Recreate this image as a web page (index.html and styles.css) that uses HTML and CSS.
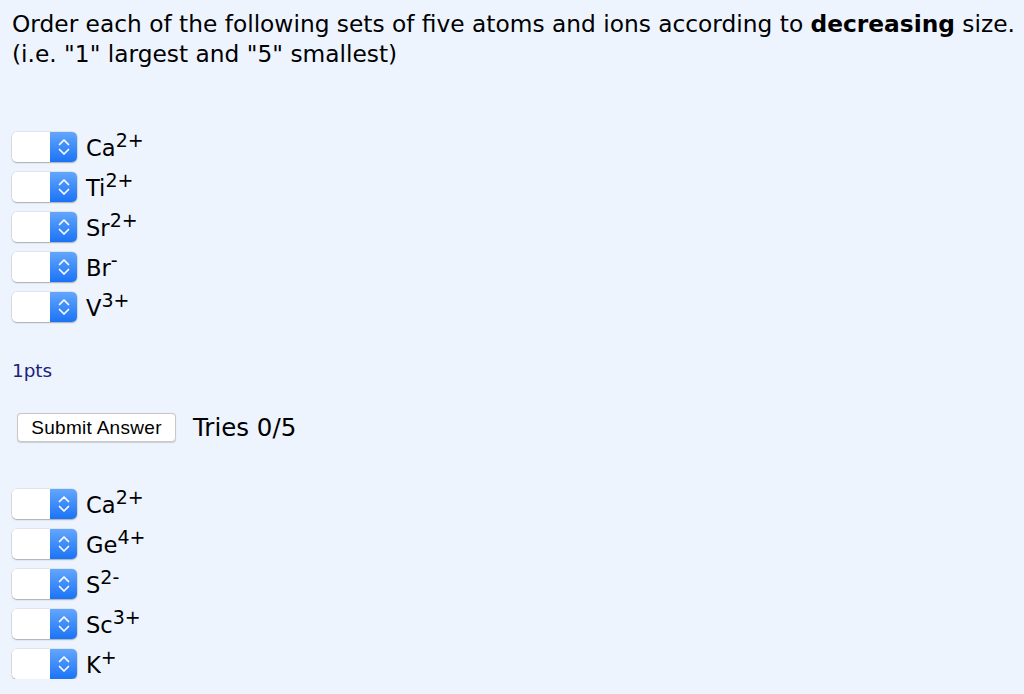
FILE: index.html
```html
<!DOCTYPE html>
<html>
<head>
<meta charset="utf-8">
<link rel="stylesheet" href="styles.css">
</head>
<body>
<div class="page">
  <p class="question">Order each of the following sets of five atoms and ions according to <b>decreasing</b> size.<br>(i.e. "1" largest and "5" smallest)</p>

  <div class="group first">
    <div class="row"><span class="sel"><span class="sel-box"></span><span class="sel-btn"><svg viewBox="0 0 12 18" width="12" height="18"><path d="M1.5 6.5 L6 2 L10.5 6.5 M1.5 11.5 L6 16 L10.5 11.5" fill="none" stroke="#fff" stroke-width="1.7" stroke-linecap="round" stroke-linejoin="round"/></svg></span></span><span class="label">Ca<sup>2+</sup></span></div>
    <div class="row"><span class="sel"><span class="sel-box"></span><span class="sel-btn"><svg viewBox="0 0 12 18" width="12" height="18"><path d="M1.5 6.5 L6 2 L10.5 6.5 M1.5 11.5 L6 16 L10.5 11.5" fill="none" stroke="#fff" stroke-width="1.7" stroke-linecap="round" stroke-linejoin="round"/></svg></span></span><span class="label">Ti<sup>2+</sup></span></div>
    <div class="row"><span class="sel"><span class="sel-box"></span><span class="sel-btn"><svg viewBox="0 0 12 18" width="12" height="18"><path d="M1.5 6.5 L6 2 L10.5 6.5 M1.5 11.5 L6 16 L10.5 11.5" fill="none" stroke="#fff" stroke-width="1.7" stroke-linecap="round" stroke-linejoin="round"/></svg></span></span><span class="label">Sr<sup>2+</sup></span></div>
    <div class="row"><span class="sel"><span class="sel-box"></span><span class="sel-btn"><svg viewBox="0 0 12 18" width="12" height="18"><path d="M1.5 6.5 L6 2 L10.5 6.5 M1.5 11.5 L6 16 L10.5 11.5" fill="none" stroke="#fff" stroke-width="1.7" stroke-linecap="round" stroke-linejoin="round"/></svg></span></span><span class="label">Br<sup>-</sup></span></div>
    <div class="row"><span class="sel"><span class="sel-box"></span><span class="sel-btn"><svg viewBox="0 0 12 18" width="12" height="18"><path d="M1.5 6.5 L6 2 L10.5 6.5 M1.5 11.5 L6 16 L10.5 11.5" fill="none" stroke="#fff" stroke-width="1.7" stroke-linecap="round" stroke-linejoin="round"/></svg></span></span><span class="label">V<sup>3+</sup></span></div>
  </div>

  <div class="pts">1pts</div>

  <div class="submit-row">
    <button class="submit">Submit Answer</button>
    <span class="tries">Tries 0/5</span>
  </div>

  <div class="group">
    <div class="row"><span class="sel"><span class="sel-box"></span><span class="sel-btn"><svg viewBox="0 0 12 18" width="12" height="18"><path d="M1.5 6.5 L6 2 L10.5 6.5 M1.5 11.5 L6 16 L10.5 11.5" fill="none" stroke="#fff" stroke-width="1.7" stroke-linecap="round" stroke-linejoin="round"/></svg></span></span><span class="label">Ca<sup>2+</sup></span></div>
    <div class="row"><span class="sel"><span class="sel-box"></span><span class="sel-btn"><svg viewBox="0 0 12 18" width="12" height="18"><path d="M1.5 6.5 L6 2 L10.5 6.5 M1.5 11.5 L6 16 L10.5 11.5" fill="none" stroke="#fff" stroke-width="1.7" stroke-linecap="round" stroke-linejoin="round"/></svg></span></span><span class="label">Ge<sup>4+</sup></span></div>
    <div class="row"><span class="sel"><span class="sel-box"></span><span class="sel-btn"><svg viewBox="0 0 12 18" width="12" height="18"><path d="M1.5 6.5 L6 2 L10.5 6.5 M1.5 11.5 L6 16 L10.5 11.5" fill="none" stroke="#fff" stroke-width="1.7" stroke-linecap="round" stroke-linejoin="round"/></svg></span></span><span class="label">S<sup>2-</sup></span></div>
    <div class="row"><span class="sel"><span class="sel-box"></span><span class="sel-btn"><svg viewBox="0 0 12 18" width="12" height="18"><path d="M1.5 6.5 L6 2 L10.5 6.5 M1.5 11.5 L6 16 L10.5 11.5" fill="none" stroke="#fff" stroke-width="1.7" stroke-linecap="round" stroke-linejoin="round"/></svg></span></span><span class="label">Sc<sup>3+</sup></span></div>
    <div class="row"><span class="sel"><span class="sel-box"></span><span class="sel-btn"><svg viewBox="0 0 12 18" width="12" height="18"><path d="M1.5 6.5 L6 2 L10.5 6.5 M1.5 11.5 L6 16 L10.5 11.5" fill="none" stroke="#fff" stroke-width="1.7" stroke-linecap="round" stroke-linejoin="round"/></svg></span></span><span class="label">K<sup>+</sup></span></div>
  </div>
</div>
</body>
</html>
```

FILE: styles.css
```css
html, body {
  margin: 0;
  padding: 0;
  background: #edf4fe;
}
body {
  font-family: "DejaVu Sans", Verdana, sans-serif;
  color: #000;
}
.page {
  padding: 9px 0 0 12px;
  display: flex;
  flex-direction: column;
}
.question {
  margin: 0;
  font-size: 23.3px;
  line-height: 30px;
  white-space: nowrap;
}
.group {
  display: flex;
  flex-direction: column;
  gap: 10px;
}
.group.first {
  margin-top: 63px;
}
.row {
  display: flex;
  align-items: center;
  height: 30px;
}
.sel {
  display: flex;
  width: 65px;
  height: 30px;
  box-sizing: border-box;
  border-radius: 5px;
  overflow: hidden;
  box-shadow: 0 0 0 0.5px rgba(0,0,0,0.12), 0 1px 1.5px rgba(0,0,0,0.25);
}
.sel-box {
  flex: 1;
  background: #fff;
}
.sel-btn {
  width: 27px;
  display: flex;
  align-items: center;
  justify-content: center;
  background: linear-gradient(#63a6fd, #1b73f6);
}
.label {
  margin-left: 9px;
  font-size: 22.6px;
  line-height: 30px;
  position: relative;
  top: 1px;
}
.label sup {
  font-size: 19px;
  vertical-align: 0;
  position: relative;
  top: -9px;
  line-height: 0;
}
.pts {
  margin-top: 34px;
  font-size: 18.4px;
  line-height: 30px;
  color: #1a237a;
}
.submit-row {
  margin-top: 27px;
  display: flex;
  align-items: center;
  margin-left: 5px;
}
.submit {
  width: 159px;
  height: 29px;
  background: #fff;
  border: 1px solid #c8c8c8;
  border-radius: 4px;
  font-family: "Liberation Sans", Arial, sans-serif;
  font-size: 19px;
  letter-spacing: 0.3px;
  color: #000;
  padding: 0;
  box-shadow: 0 0.5px 1px rgba(0,0,0,0.15);
}
.tries {
  margin-left: 17px;
  font-size: 24.5px;
}
.submit-row + .group {
  margin-top: 47px;
}
```
